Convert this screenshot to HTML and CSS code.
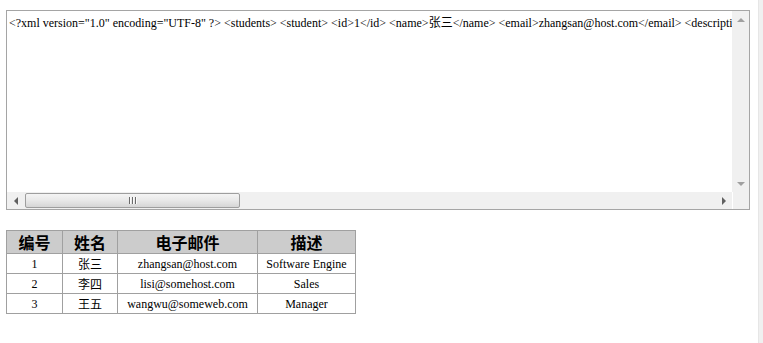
FILE: index.html
```html
<!DOCTYPE html>
<html lang="zh">
<head>
<meta charset="UTF-8">
<title>XML</title>
<link rel="stylesheet" href="styles.css">
</head>
<body>
<div class="page">
  <main class="content">
    <div class="textarea">
      <div class="ta-body">
        <div class="ta-text">&lt;?xml version="1.0" encoding="UTF-8" ?&gt; &lt;students&gt; &lt;student&gt; &lt;id&gt;1&lt;/id&gt; &lt;name&gt;<span class="cjk">张三</span>&lt;/name&gt; &lt;email&gt;zhangsan@host.com&lt;/email&gt; &lt;descripti</div>
        <div class="vscroll">
          <div class="sb-btn"><span class="arrow-up"></span></div>
          <div class="sb-track"></div>
          <div class="sb-btn"><span class="arrow-down"></span></div>
        </div>
      </div>
      <div class="hscroll">
        <div class="sb-btn"><span class="arrow-left"></span></div>
        <div class="thumb"><span class="grip"></span><span class="grip"></span><span class="grip"></span></div>
        <div class="sb-track"></div>
        <div class="sb-btn"><span class="arrow-right"></span></div>
        <div class="corner"></div>
      </div>
    </div>

    <table class="grid">
      <colgroup>
        <col class="c1"><col class="c2"><col class="c3"><col class="c4">
      </colgroup>
      <thead>
        <tr><th>编号</th><th>姓名</th><th>电子邮件</th><th>描述</th></tr>
      </thead>
      <tbody>
        <tr><td>1</td><td class="cjk">张三</td><td>zhangsan@host.com</td><td>Software Engine</td></tr>
        <tr><td>2</td><td class="cjk">李四</td><td>lisi@somehost.com</td><td>Sales</td></tr>
        <tr><td>3</td><td class="cjk">王五</td><td>wangwu@someweb.com</td><td>Manager</td></tr>
      </tbody>
    </table>
  </main>
  <div class="page-scroll"></div>
</div>
</body>
</html>
```
FILE: styles.css
```css
html, body {
  margin: 0;
  padding: 0;
  background: #ffffff;
}
.page {
  display: flex;
  height: 343px;
  overflow: hidden;
}
.content {
  flex: 1;
  padding: 10px 0 0 6px;
  font-family: "Liberation Serif", "Noto Sans CJK SC", serif;
  color: #000;
}
.page-scroll {
  width: 4px;
  background: #f0f0f0;
  border-left: 1px solid #e6e6e6;
}

/* textarea look-alike */
.textarea {
  width: 742px;
  height: 198px;
  border: 1px solid #a5a5a5;
  display: flex;
  flex-direction: column;
  background: #fff;
}
.ta-body {
  display: flex;
  height: 181px;
}
.ta-text {
  flex: 1;
  overflow: hidden;
  white-space: nowrap;
  font-size: 12px;
  line-height: 15px;
  padding: 3px 0 0 2px;
}
.cjk {
  font-family: "Noto Sans CJK SC", sans-serif;
}
.ta-text .cjk {
  font-size: 12px;
}
.vscroll {
  width: 17px;
  display: flex;
  flex-direction: column;
  background: #f0f0f0;
}
.vscroll .sb-track { flex: 1; }
.sb-btn {
  width: 17px;
  height: 17px;
  display: flex;
  align-items: center;
  justify-content: center;
  background: #f0f0f0;
  flex: none;
}
.hscroll {
  display: flex;
  height: 17px;
  background: #f0f0f0;
}
.hscroll .sb-track { flex: 1; }
.corner {
  width: 17px;
  background: #f0f0f0;
  border-left: 1px solid #ffffff;
  box-sizing: border-box;
}
.thumb {
  width: 215px;
  height: 15px;
  margin-top: 1px;
  margin-left: 1px;
  box-sizing: border-box;
  border: 1px solid #9e9e9e;
  border-radius: 2px;
  background: linear-gradient(#f4f4f4, #e8e8e8 50%, #d6d6d6);
  display: flex;
  align-items: center;
  justify-content: center;
  gap: 1px;
}
.grip {
  width: 1px;
  height: 7px;
  background: #6a6a6a;
  border-right: 1px solid #fafafa;
}
.arrow-up, .arrow-down, .arrow-left, .arrow-right {
  width: 0;
  height: 0;
  border: 0 solid transparent;
}
.arrow-up {
  border-width: 0 4px 4px 4px;
  border-bottom-color: #a0a0a0;
}
.arrow-down {
  border-width: 4px 4px 0 4px;
  border-top-color: #a0a0a0;
}
.arrow-left {
  border-width: 4px 4px 4px 0;
  border-right-color: #606060;
}
.arrow-right {
  border-width: 4px 0 4px 4px;
  border-left-color: #606060;
}

/* table */
.grid {
  margin-top: 20px;
  border-collapse: collapse;
  table-layout: fixed;
  width: 349px;
  font-size: 12px;
}
.c1 { width: 56px; }
.c2 { width: 55px; }
.c3 { width: 140px; }
.c4 { width: 98px; }
.grid th, .grid td {
  border: 1px solid #a0a0a0;
  text-align: center;
  padding: 0;
  white-space: nowrap;
  overflow: hidden;
}
.grid th {
  background: #cccccc;
  height: 22px;
  font-family: "Noto Sans CJK SC", sans-serif;
  font-weight: bold;
  font-size: 16px;
  line-height: 20px;
}
.grid td {
  height: 19px;
  line-height: 16px;
}
.grid td.cjk {
  font-size: 12px;
}
```
